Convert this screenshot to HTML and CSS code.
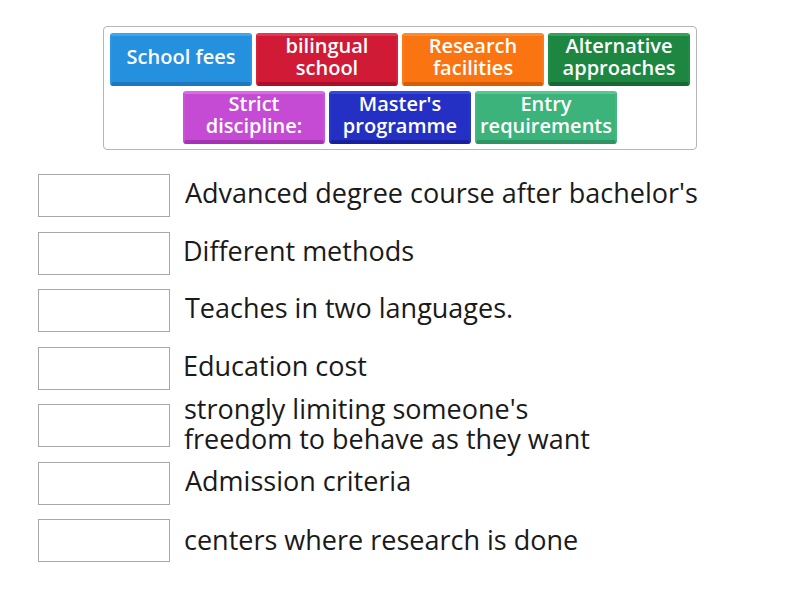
FILE: index.html
```html
<!DOCTYPE html>
<html>
<head>
<meta charset="utf-8">
<link rel="stylesheet" href="styles.css">
</head>
<body>
<div class="bank">
  <div class="tile blue">School fees</div>
  <div class="tile red">bilingual<br>school</div>
  <div class="tile orange">Research<br>facilities</div>
  <div class="tile green">Alternative<br>approaches</div>
  <div class="tile purple">Strict<br>discipline:</div>
  <div class="tile navy">Master's<br>programme</div>
  <div class="tile teal">Entry<br>requirements</div>
</div>
<div class="rows">
  <div class="row"><div class="slot"></div><div class="text">Advanced degree course after bachelor's</div></div>
  <div class="row"><div class="slot"></div><div class="text l2">Different methods</div></div>
  <div class="row"><div class="slot"></div><div class="text">Teaches in two languages.</div></div>
  <div class="row"><div class="slot"></div><div class="text l2">Education cost</div></div>
  <div class="row"><div class="slot"></div><div class="text l1 two">strongly limiting someone's<br>freedom to behave as they want</div></div>
  <div class="row"><div class="slot"></div><div class="text">Admission criteria</div></div>
  <div class="row"><div class="slot"></div><div class="text l1">centers where research is done</div></div>
</div>
</body>
</html>
```
FILE: styles.css
```css
html, body {
  margin: 0;
  padding: 0;
  background: #fff;
  font-family: "Open Sans", "DejaVu Sans", sans-serif;
}
.bank {
  box-sizing: border-box;
  margin: 26px 0 0 103px;
  width: 594px;
  height: 124px;
  border: 1px solid #b5b5b5;
  border-radius: 4px;
  padding: 6px 6px;
  display: flex;
  flex-wrap: wrap;
  justify-content: center;
  align-content: flex-start;
  gap: 5px 4px;
}
.tile {
  box-sizing: border-box;
  width: 142px;
  height: 53px;
  border-radius: 3px;
  color: #fff;
  font-weight: 600;
  font-size: 20px;
  line-height: 22px;
  text-align: center;
  display: flex;
  align-items: center;
  justify-content: center;
  padding-bottom: 4px;
  border-style: solid;
  border-width: 3px 2px 4px 2px;
  white-space: nowrap;
}
.blue { background: #2590dd; border-color: #3aa6ec #2896e2 #1c78c0 #2896e2; }
.red { background: #d01a36; border-color: #e3384f #d5223c #ac0f26 #d5223c; }
.orange { background: #fa7411; border-color: #ff8a2c #fc7a18 #d55e06 #fc7a18; }
.green { background: #1d8641; border-color: #2fa556 #1f8c45 #146a32 #1f8c45; }
.purple { background: #c64bd4; border-color: #d96be4 #cb53d8 #a632b4 #cb53d8; }
.navy { background: #2430c4; border-color: #3848dc #2835c9 #1820a0 #2835c9; }
.teal { background: #3cb37a; border-color: #55c790 #40b87e #2c9563 #40b87e; }

.rows {
  margin: 24px 0 0 38px;
  display: flex;
  flex-direction: column;
  gap: 14.5px;
}
.row {
  display: flex;
  align-items: center;
  gap: 15px;
  height: 43px;
}
.slot {
  box-sizing: border-box;
  width: 132px;
  height: 43px;
  border: 1px solid #a8a8a8;
  flex: none;
}
.text {
  font-size: 27px;
  line-height: 30px;
  color: #1a1a1a;
  white-space: nowrap;
  margin-top: -5px;
}
.text.l2 { margin-left: -2px; }
.text.l1 { margin-left: -1px; margin-top: -2px; }
.text.two { margin-top: -4px; }
```
